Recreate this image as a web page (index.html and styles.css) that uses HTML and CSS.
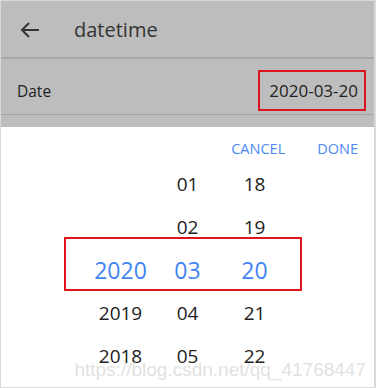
FILE: index.html
```html
<!DOCTYPE html>
<html>
<head>
<meta charset="utf-8">
<link rel="stylesheet" href="styles.css">
</head>
<body>
<div class="frame">
  <div class="header">
    <svg class="back" width="24" height="24" viewBox="0 0 24 24"><path d="M21 12H4M11 5L4 12L11 19" fill="none" stroke="#333" stroke-width="2"/></svg>
    <span class="title">datetime</span>
  </div>
  <div class="row">
    <span class="label">Date</span>
    <span class="value">2020-03-20</span>
  </div>
  <div class="gap"></div>
  <div class="picker">
    <div class="toolbar">
      <span class="btn">CANCEL</span>
      <span class="btn">DONE</span>
    </div>
    <div class="wheel">
      <div class="line"><span></span><span>01</span><span>18</span></div>
      <div class="line"><span></span><span>02</span><span>19</span></div>
      <div class="line sel"><span>2020</span><span>03</span><span>20</span><i class="mark"></i></div>
      <div class="line"><span>2019</span><span>04</span><span>21</span></div>
      <div class="line"><span>2018</span><span>05</span><span>22</span></div>
    </div>
    <div class="watermark">https://blog.csdn.net/qq_41768447</div>
  </div>
</div>
</body>
</html>
```
FILE: styles.css
```css
html, body { margin: 0; padding: 0; background: #fff; }
body { font-family: "Open Sans", "Noto Sans", sans-serif; color: #222; }
.frame {
  width: 376px; height: 388px; box-sizing: border-box;
  border: 1px solid #d9d9d9; border-right-width: 2px;
  display: flex; flex-direction: column; overflow: hidden;
}
.header {
  height: 55px; background: #bdbdbd; display: flex; align-items: center;
  border-bottom: 2px solid #aaaaaa; flex: none; padding-top: 1px;
}
.back { margin-left: 17px; }
.title { margin-left: 32px; font-size: 20px; color: #333; }
.row {
  height: 47px; padding-top: 8px; background: #bdbdbd; display: flex; align-items: center;
  justify-content: space-between; border-bottom: 1px solid #a3a3a3; flex: none;
}
.label { margin-left: 16px; font-size: 15.5px; color: #222; }
.value {
  margin-right: 8px; font-size: 17px; line-height: 23px; color: #222;
  border: 2px solid #e0141e; padding: 7px 6px 7px 9px;
}
.gap { height: 12px; background: #bdbdbd; flex: none; }
.picker { position: relative; flex: 1; background: #fff; }
.toolbar { display: flex; justify-content: flex-end; gap: 32px; padding: 12px 16px 0 0; height: 23px; }
.btn { font-size: 14.5px; color: #4a8af4; }
.wheel { display: flex; flex-direction: column; align-items: center; }
.line { display: grid; grid-template-columns: 67px 67px 67px; height: 43px; align-items: center; text-align: center; font-size: 19px; color: #222; }
.line.sel { position: relative; color: #4285f4; font-size: 23px; }
.mark { position: absolute; left: -23px; top: -11px; width: 238px; height: 54px; box-sizing: border-box; border: 2px solid #e0141e; }
.watermark { position: absolute; right: 8px; bottom: 6px; font-family: "Liberation Sans", sans-serif; font-size: 19px; color: rgba(200,200,200,0.55); }
```
